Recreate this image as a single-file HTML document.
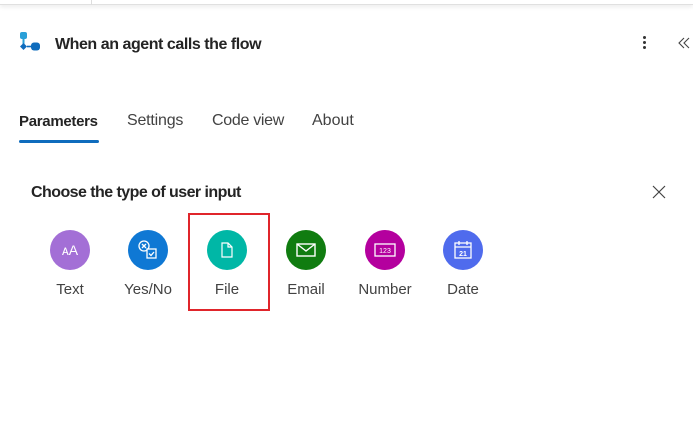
<!DOCTYPE html>
<html><head><style>
*{margin:0;padding:0;box-sizing:border-box}
body{width:693px;height:426px;background:#fff;font-family:"Liberation Sans",sans-serif;color:#242424;position:relative;overflow:hidden}
.abs{position:absolute}
.topbar{left:0;top:0;width:693px;height:5px;border-bottom:1px solid #e0e0e0;box-shadow:0 2px 4px rgba(0,0,0,.08)}
.title{left:55px;top:36px;font-size:16px;font-weight:bold;letter-spacing:-0.45px}
.tab{top:112px;font-size:16px;color:#424242}
.circ{width:40px;height:40px;border-radius:50%;top:230px;display:flex;align-items:center;justify-content:center}
.lbl{top:281px;font-size:15px;color:#424242;width:80px;text-align:center}
</style></head><body>
<div class="abs topbar"></div>
<div class="abs" style="left:91px;top:0;width:1px;height:5px;background:#ddd"></div>

<svg class="abs" style="left:18px;top:31px" width="26" height="24" viewBox="0 0 26 24">
<rect x="2" y="1" width="7" height="7" rx="2" fill="#2aa0d8"/>
<rect x="4.5" y="8" width="2" height="5" fill="#2aa0d8"/>
<path d="M5.5 12 L9 15.5 L5.5 19 L2 15.5Z" fill="#0f6cbd"/>
<rect x="9" y="14.7" width="4" height="1.6" fill="#0f6cbd"/>
<rect x="13" y="11.5" width="9" height="8" rx="3" fill="#0f6cbd"/>
</svg>
<div class="abs title">When an agent calls the flow</div>
<div class="abs" style="left:643px;top:36px;width:4px">
<div style="width:3px;height:3px;background:#333;border-radius:50%;margin-bottom:2px"></div>
<div style="width:3px;height:3px;background:#333;border-radius:50%;margin-bottom:2px"></div>
<div style="width:3px;height:3px;background:#333;border-radius:50%"></div></div>
<svg class="abs" style="left:678px;top:37px" width="14" height="12" viewBox="0 0 14 12"><path d="M6 1 L1 6 L6 11 M11 1 L6 6 L11 11" fill="none" stroke="#444" stroke-width="1.1"/></svg>

<div class="abs tab" style="left:19px;font-weight:bold;color:#242424;font-size:15px;letter-spacing:-0.3px;top:113px">Parameters</div>
<div class="abs" style="left:19px;top:140px;width:80px;height:3px;background:#0f6cbd;border-radius:2px"></div>
<div class="abs tab" style="left:127px;letter-spacing:-0.2px">Settings</div>
<div class="abs tab" style="left:212px;letter-spacing:-0.3px">Code view</div>
<div class="abs tab" style="left:312px">About</div>

<div class="abs" style="left:31px;top:184px;font-size:16px;font-weight:bold;letter-spacing:-0.55px">Choose the type of user input</div>
<svg class="abs" style="left:652px;top:185px" width="14" height="14" viewBox="0 0 14 14"><path d="M1 1L13 13M13 1L1 13" stroke="#444" stroke-width="1.2"/></svg>

<div class="abs circ" style="left:50px;background:#a36fd6"><span style="color:#fff;font-size:14px">ᴀA</span></div>
<div class="abs circ" style="left:128px;background:#0f78d4"><svg width="24" height="24" viewBox="0 0 24 24" fill="none" stroke="#fff" stroke-width="1.3"><circle cx="8" cy="8" r="5"/><path d="M6 6l4 4M10 6l-4 4"/><rect x="11" y="11" width="9" height="9" fill="#0f78d4"/><path d="M13 15.5l2 2 3-3.5"/></svg></div>
<div class="abs circ" style="left:207px;background:#00b7a6"><svg width="14" height="16" viewBox="0 0 14 16" fill="none" stroke="#fff" stroke-width="1.2"><path d="M2 1h6l4 4v10H2z M8 1v4h4"/></svg></div>
<div class="abs circ" style="left:286px;background:#107c10"><svg width="20" height="14" viewBox="0 0 20 14" fill="none" stroke="#fff" stroke-width="1.4"><rect x="1" y="1" width="18" height="12"/><path d="M1 1l9 7 9-7"/></svg></div>
<div class="abs circ" style="left:365px;background:#b4009e"><svg width="22" height="14" viewBox="0 0 22 14"><rect x="1" y="1" width="20" height="12" fill="none" stroke="#fff" stroke-width="1.3"/><text x="11" y="10" font-size="7" fill="#fff" text-anchor="middle" font-family="Liberation Sans">123</text></svg></div>
<div class="abs circ" style="left:443px;background:#4f6bed"><svg width="20" height="20" viewBox="0 0 20 20"><rect x="2" y="3" width="16" height="15" fill="none" stroke="#fff" stroke-width="1.3"/><path d="M2 7h16M6 1v4M14 1v4" stroke="#fff" stroke-width="1.3"/><text x="10" y="16" font-size="7" fill="#fff" text-anchor="middle" font-weight="bold" font-family="Liberation Sans">21</text></svg></div>

<div class="abs lbl" style="left:30px">Text</div>
<div class="abs lbl" style="left:108px">Yes/No</div>
<div class="abs lbl" style="left:187px">File</div>
<div class="abs lbl" style="left:266px">Email</div>
<div class="abs lbl" style="left:345px">Number</div>
<div class="abs lbl" style="left:423px">Date</div>

<div class="abs" style="left:188px;top:213px;width:82px;height:98px;border:2px solid #e0252b"></div>
</body></html>
